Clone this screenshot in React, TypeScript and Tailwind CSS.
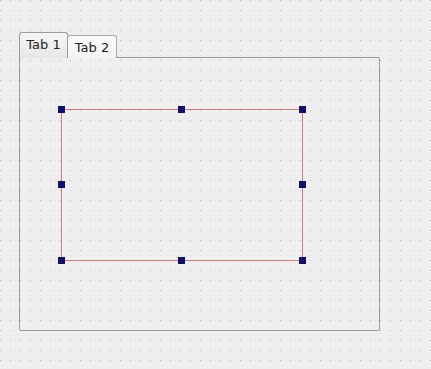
const handles = [
  "left-[-3px] top-[-3px]",
  "left-[117px] top-[-3px]",
  "right-[-3px] top-[-3px]",
  "left-[-3px] top-[72px]",
  "right-[-3px] top-[72px]",
  "left-[-3px] bottom-[-3px]",
  "left-[117px] bottom-[-3px]",
  "right-[-3px] bottom-[-3px]",
];

export default function App() {
  return (
    <div
      className="w-[431px] h-[369px] bg-[#efefef] bg-[radial-gradient(circle_at_0.5px_0.5px,#b5b5b5_0.7px,transparent_0.9px)] bg-[length:10px_10px] pt-[33px] pl-[19px] overflow-hidden"
      style={{ fontFamily: '"DejaVu Sans", sans-serif' }}
    >
      <div className="flex items-end h-[25px]">
        <div className="relative z-10 h-[26px] w-[49px] border border-b-0 border-[#9c9c9c] rounded-t-[3px] bg-gradient-to-b from-[#f6f6f6] to-[#e6e6e6] flex items-center justify-center text-[13px] text-[#222] pb-[1px]">
          Tab 1
        </div>
        <div className="h-[23px] w-[50px] ml-[-1px] border border-b-0 border-[#a8a8a8] rounded-t-[3px] bg-gradient-to-b from-[#fbfbfb] to-[#f3f3f3] flex items-center justify-center text-[13px] text-[#222] pt-[1px]">
          Tab 2
        </div>
      </div>
      <div className="w-[361px] h-[274px] mt-[-1px] border border-[#9a9a9a] rounded-[2px] pl-[41px] pt-[51px]">
        <div className="relative w-[242px] h-[152px]">
          <div className="absolute left-0 top-0 w-full h-px bg-[#e07a7a]" />
          <div className="absolute left-0 bottom-0 w-full h-px bg-[#e07a7a]" />
          <div className="absolute left-0 top-0 h-full w-px bg-[#e07a7a]" />
          <div className="absolute right-0 top-0 h-full w-px bg-[#e07a7a]" />
          {handles.map((h, i) => (
            <div key={i} className={`absolute w-[7px] h-[7px] bg-[#10106a] ${h}`} />
          ))}
        </div>
      </div>
    </div>
  );
}
